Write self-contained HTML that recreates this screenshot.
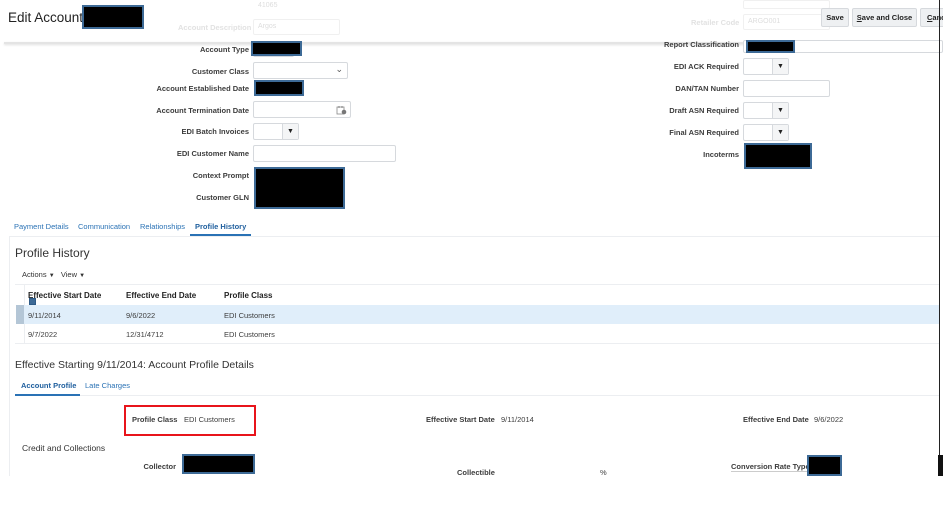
<!DOCTYPE html>
<html><head><meta charset="utf-8">
<style>
*{margin:0;padding:0;box-sizing:border-box}
body{width:943px;height:505px;background:#fff;position:relative;overflow:hidden;font-family:"Liberation Sans",Arial,sans-serif;color:#333}
.a{position:absolute;white-space:nowrap}
.lb{font-size:7.5px;font-weight:bold;color:#3d3d3d;text-align:right}
.t{font-size:7.5px;color:#3d3d3d}
.blk{position:absolute;background:#000;border:2px solid #3d6a96}
.in{position:absolute;background:#fff;border:1px solid #d6d9dd;border-radius:2px}
.sel{position:absolute;background:#fff;border:1px solid #d6d9dd;border-radius:2px}
.sel i{position:absolute;right:0;top:0;bottom:0;width:16px;border-left:1px solid #d6d9dd;background:#f4f5f6;font-style:normal;font-size:7px;text-align:center;line-height:16px;color:#222}
.tab{font-size:7.5px;color:#2a72b5}
.bt{position:absolute;background:#eef0f2;border:1px solid #d6d9dd;border-radius:2px;font-size:7.5px;font-weight:bold;color:#222;text-align:center;line-height:16px}
.hl{position:absolute;height:1px;background:#eceef1}
</style></head><body>
<div class="a" style="left:258px;top:2px;font-size:7px;color:#ddd">41065</div>
<div class="a" style="left:178px;top:23px;font-size:7.5px;font-weight:bold;color:#e2e2e2">Account Description</div>
<div class="in" style="left:253px;top:19px;width:87px;height:16px;border-color:#f0f0f0"></div>
<div class="a" style="left:258px;top:23px;font-size:7px;color:#ddd">Argos</div>
<div class="a" style="left:691px;top:18px;font-size:7.5px;font-weight:bold;color:#e2e2e2">Retailer Code</div>
<div class="in" style="left:743px;top:14px;width:87px;height:16px;border-color:#f0f0f0"></div>
<div class="a" style="left:748px;top:18px;font-size:7px;color:#ddd">ARGO001</div>
<div class="in" style="left:743px;top:0;width:87px;height:9px;border-color:#f0f0f0"></div>
<div class="a" style="left:4px;top:42px;width:939px;height:2px;background:#e4e4e4;box-shadow:0 1px 2px #ddd"></div>
<div class="a" style="left:8px;top:10px;font-size:13.5px;color:#222">Edit Account:</div>
<div class="blk" style="left:82px;top:5px;width:62px;height:24px"></div>
<div class="bt" style="left:821px;top:8px;width:28px;height:19px;line-height:17px">Save</div>
<div class="bt" style="left:852px;top:8px;width:65px;height:19px;line-height:17px"><u>S</u>ave and Close</div>
<div class="bt" style="left:920px;top:8px;width:30px;height:19px;line-height:17px;text-align:left;padding-left:6px"><u>C</u>ancel</div>
<div class="a lb" style="right:694px;top:45px">Account Type</div>
<div class="in" style="left:253px;top:45px;width:41px;height:12px"></div>
<div class="blk" style="left:251px;top:41px;width:51px;height:15px"></div>
<div class="a lb" style="right:694px;top:67px">Customer Class</div>
<div class="in" style="left:253px;top:62px;width:95px;height:17px"><span class="a" style="right:4px;top:1px;font-size:9px;color:#555">&#8964;</span></div>
<div class="a lb" style="right:694px;top:84px">Account Established Date</div>
<div class="blk" style="left:254px;top:80px;width:50px;height:16px"></div>
<div class="a lb" style="right:694px;top:106px">Account Termination Date</div>
<div class="in" style="left:253px;top:101px;width:98px;height:17px">
<svg class="a" style="right:3px;top:3px" width="11" height="10" viewBox="0 0 11 10"><rect x="1" y="2" width="7" height="7" fill="none" stroke="#888" stroke-width="0.8"/><line x1="3" y1="1" x2="3" y2="3" stroke="#888"/><line x1="6" y1="1" x2="6" y2="3" stroke="#888"/><circle cx="8" cy="7" r="2.3" fill="#777"/></svg></div>
<div class="a lb" style="right:694px;top:127px">EDI Batch Invoices</div>
<div class="sel" style="left:253px;top:123px;width:46px;height:17px"><i>&#9660;</i></div>
<div class="a lb" style="right:694px;top:149px">EDI Customer Name</div>
<div class="in" style="left:253px;top:145px;width:143px;height:17px"></div>
<div class="a lb" style="right:694px;top:171px">Context Prompt</div>
<div class="a lb" style="right:694px;top:193px">Customer GLN</div>
<div class="blk" style="left:254px;top:167px;width:91px;height:42px"></div>
<div class="a lb" style="right:204px;top:40px">Report Classification</div>
<div class="in" style="left:743px;top:40px;width:200px;height:13px"></div>
<div class="blk" style="left:746px;top:40px;width:49px;height:13px"></div>
<div class="a lb" style="right:204px;top:62px">EDI ACK Required</div>
<div class="sel" style="left:743px;top:58px;width:46px;height:17px"><i>&#9660;</i></div>
<div class="a lb" style="right:204px;top:84px">DAN/TAN Number</div>
<div class="in" style="left:743px;top:80px;width:87px;height:17px"></div>
<div class="a lb" style="right:204px;top:106px">Draft ASN Required</div>
<div class="sel" style="left:743px;top:102px;width:46px;height:17px"><i>&#9660;</i></div>
<div class="a lb" style="right:204px;top:128px">Final ASN Required</div>
<div class="sel" style="left:743px;top:124px;width:46px;height:17px"><i>&#9660;</i></div>
<div class="a lb" style="right:204px;top:150px">Incoterms</div>
<div class="blk" style="left:744px;top:143px;width:68px;height:26px"></div>
<div class="a tab" style="left:14px;top:222px">Payment Details</div>
<div class="a tab" style="left:78px;top:222px">Communication</div>
<div class="a tab" style="left:140px;top:222px">Relationships</div>
<div class="a tab" style="left:195px;top:222px;font-weight:bold;color:#1f5f9e">Profile History</div>
<div class="hl" style="left:9px;top:236px;width:930px"></div>
<div class="a" style="left:190px;top:234px;width:61px;height:2px;background:#2a72b5"></div>
<div class="a" style="left:9px;top:236px;width:1px;height:240px;background:#eceef1"></div>
<div class="a" style="left:15px;top:246px;font-size:12px;color:#333">Profile History</div>
<div class="a t" style="left:22px;top:270px;color:#333">Actions <span style="font-size:6px">&#9660;</span> &nbsp; View <span style="font-size:6px">&#9660;</span></div>
<div class="hl" style="left:15px;top:284px;width:924px"></div>
<div class="a" style="left:24px;top:285px;width:1px;height:58px;background:#eceef1"></div>
<div class="a" style="left:28px;top:291px;font-size:8px;font-weight:bold;color:#222">Effective Start Date</div>
<div class="a" style="left:126px;top:291px;font-size:8px;font-weight:bold;color:#222">Effective End Date</div>
<div class="a" style="left:224px;top:291px;font-size:8px;font-weight:bold;color:#222">Profile Class</div>
<div class="a" style="left:29px;top:298px;width:7px;height:7px;background:#3d6a96;border:1px solid #2d5a86"></div>
<div class="a" style="left:16px;top:305px;width:923px;height:19px;background:#e0eefa"></div>
<div class="a" style="left:16px;top:305px;width:8px;height:19px;background:#b4c6d6"></div>
<div class="a t" style="left:28px;top:311px">9/11/2014</div>
<div class="a t" style="left:126px;top:311px">9/6/2022</div>
<div class="a t" style="left:224px;top:311px">EDI Customers</div>
<div class="a t" style="left:28px;top:330px">9/7/2022</div>
<div class="a t" style="left:126px;top:330px">12/31/4712</div>
<div class="a t" style="left:224px;top:330px">EDI Customers</div>
<div class="hl" style="left:15px;top:343px;width:924px"></div>
<div class="a" style="left:15px;top:359px;font-size:10.5px;color:#333">Effective Starting 9/11/2014: Account Profile Details</div>
<div class="a tab" style="left:21px;top:381px;font-weight:bold;color:#1f5f9e">Account Profile</div>
<div class="a tab" style="left:85px;top:381px">Late Charges</div>
<div class="hl" style="left:15px;top:395px;width:924px"></div>
<div class="a" style="left:15px;top:394px;width:65px;height:2px;background:#2a72b5"></div>
<div class="a" style="left:124px;top:405px;width:132px;height:31px;border:2px solid #e8141b"></div>
<div class="a lb" style="left:132px;top:415px">Profile Class</div>
<div class="a t" style="left:184px;top:415px">EDI Customers</div>
<div class="a lb" style="left:426px;top:415px">Effective Start Date</div>
<div class="a t" style="left:501px;top:415px">9/11/2014</div>
<div class="a lb" style="left:743px;top:415px">Effective End Date</div>
<div class="a t" style="left:814px;top:415px">9/6/2022</div>
<div class="a" style="left:22px;top:443px;font-size:8.5px;color:#333">Credit and Collections</div>
<div class="a lb" style="right:767px;top:462px">Collector</div>
<div class="blk" style="left:182px;top:454px;width:73px;height:20px"></div>
<div class="a lb" style="left:457px;top:468px">Collectible</div>
<div class="a t" style="left:600px;top:468px">%</div>
<div class="a lb" style="left:731px;top:462px;border-bottom:1px solid #ccc">Conversion Rate Type</div>
<div class="blk" style="left:807px;top:455px;width:35px;height:21px"></div>
<div class="a" style="left:939px;top:0;width:1px;height:455px;background:#222"></div>
<div class="a" style="left:938px;top:455px;width:5px;height:21px;background:#111"></div>
</body></html>
